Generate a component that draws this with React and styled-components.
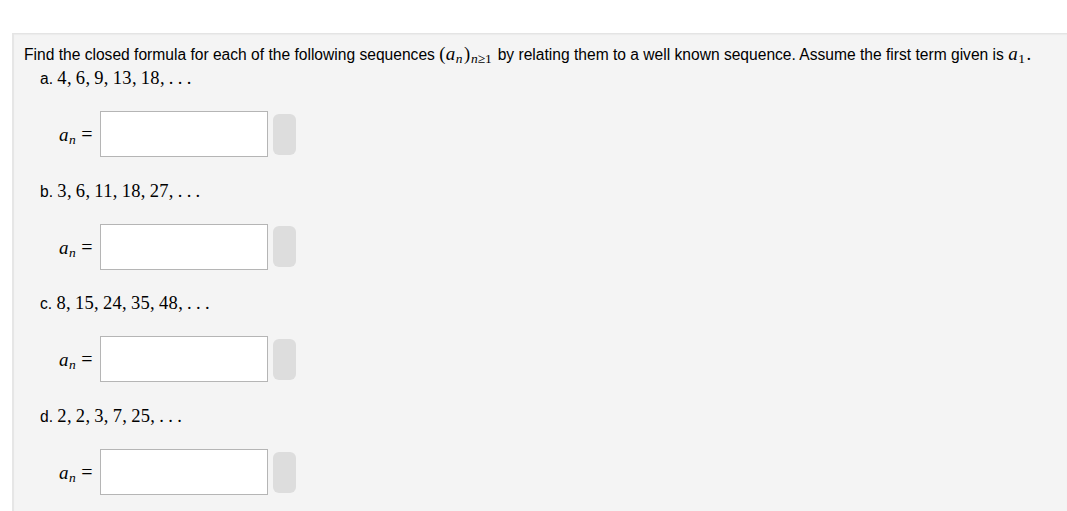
import { createGlobalStyle, styled } from "styled-components";

const Global = createGlobalStyle`
  html, body {
    margin: 0;
    padding: 0;
    background: #ffffff;
    overflow: hidden;
  }
`;

const Page = styled.div`
  padding: 33px 0 0 12px;
  font-family: "Liberation Sans", Arial, sans-serif;
  font-size: 15.6px;
  color: #000;
`;

const Panel = styled.div`
  background: #f4f4f4;
  border-top: 1px solid #e4e4e4;
  border-left: 2px solid #e6e6e6;
  box-shadow: inset 0 1px 1px #ececec;
  padding: 9px 0 40px 10px;
  min-height: 500px;
`;

const Intro = styled.div`
  line-height: 24px;
  white-space: nowrap;
`;

const M = styled.span`
  font-family: "Liberation Serif", "Times New Roman", serif;
  font-size: 18.5px;
  letter-spacing: 0.3px;
  line-height: 1;
`;

const V = styled.i`
  font-family: "Liberation Serif", "Times New Roman", serif;
  font-style: italic;
  font-size: 19px;
  line-height: 1;
`;

const Sub = styled.sub`
  font-family: "Liberation Serif", "Times New Roman", serif;
  font-size: 13.5px;
  font-style: ${(p) => (p.$italic ? "italic" : "normal")};
  vertical-align: -3px;
  line-height: 0;
  margin-left: 0.5px;
  margin-right: 1.5px;
`;

const List = styled.div`
  padding-left: 16px;
`;

const Item = styled.div`
  margin-bottom: 22.7px;
`;

const Label = styled.div`
  line-height: 24px;
  margin-bottom: 20px;
`;

const AnswerRow = styled.div`
  display: flex;
  align-items: center;
  padding-left: 19px;
`;

const Lhs = styled.span`
  width: 41px;
  white-space: nowrap;
  line-height: 1;
`;

const Eq = styled.span`
  font-family: "Liberation Serif", "Times New Roman", serif;
  font-size: 20px;
  margin-left: 4px;
`;

const Input = styled.div`
  width: 166px;
  height: 44px;
  background: #fff;
  border: 1px solid #b5b5b5;
`;

const Check = styled.div`
  width: 23px;
  height: 41px;
  margin-left: 5px;
  background: #dddddd;
  border-radius: 6px;
`;

const t = "\u2009";
const sequences = [
  { tag: "a.", terms: [4, 6, 9, 13, 18] },
  { tag: "b.", terms: [3, 6, 11, 18, 27] },
  { tag: "c.", terms: [8, 15, 24, 35, 48] },
  { tag: "d.", terms: [2, 2, 3, 7, 25] },
];

export default function App() {
  return (
    <Page>
      <Global />
      <Panel>
        <Intro>
          Find the closed formula for each of the following sequences{" "}
          <M>(</M>
          <V>a</V>
          <Sub $italic>n</Sub>
          <M>)</M>
          <Sub>
            <i>n</i>≥1
          </Sub>{" "}
          by relating them to a well known sequence. Assume the first term given is{" "}
          <V>a</V>
          <Sub>1</Sub>
          <M>.</M>
        </Intro>
        <List>
          {sequences.map((s) => (
            <Item key={s.tag}>
              <Label>
                {s.tag}{" "}
                <M>
                  {s.terms.join("," + t) + "," + t + ".\u2009.\u2009."}
                </M>
              </Label>
              <AnswerRow>
                <Lhs>
                  <V>a</V>
                  <Sub $italic>n</Sub>
                  <Eq>=</Eq>
                </Lhs>
                <Input />
                <Check />
              </AnswerRow>
            </Item>
          ))}
        </List>
      </Panel>
    </Page>
  );
}
